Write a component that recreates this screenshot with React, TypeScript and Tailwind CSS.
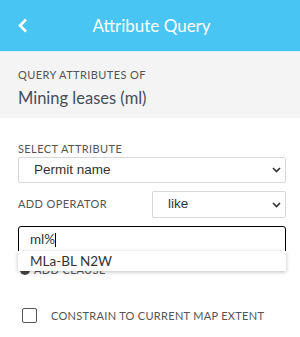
function ChevronDown() {
  return (
    <svg width="9" height="6" viewBox="0 0 9 6" className="shrink-0">
      <path d="M1 1l3.5 3.5L8 1" fill="none" stroke="#333" strokeWidth="1.6" />
    </svg>
  );
}

function SelectBox({ value, className }: { value: string; className?: string }) {
  return (
    <div
      className={`flex items-center justify-between rounded-[2px] border border-[#d8d8d8] bg-white pl-[15px] pr-[4px] ${className ?? ''}`}
    >
      <span className="text-[13.5px] text-[#333]" style={{ fontFamily: '"Liberation Sans", Arial, sans-serif' }}>
        {value}
      </span>
      <ChevronDown />
    </div>
  );
}

export default function App() {
  return (
    <div
      className="flex h-[337px] w-[300px] flex-col overflow-hidden bg-white"
      style={{ fontFamily: 'Lato, "Open Sans", sans-serif' }}
    >
      <header className="relative flex h-[51px] shrink-0 items-center justify-center bg-[#48c5f2]">
        <svg width="10" height="15" viewBox="0 0 10 15" className="absolute left-[18px] top-[18px]">
          <path d="M8 1.5L2 7.5l6 6" fill="none" stroke="white" strokeWidth="2.6" />
        </svg>
        <h1 className="pl-[3px] text-[17px] text-white">Attribute Query</h1>
      </header>
      <div className="h-px bg-[#d9eef8]" />
      <section className="h-[66px] bg-[#f4f4f4] px-[18px] pt-[16px]">
        <div className="text-[11px] leading-[14px] tracking-[0.4px] text-[#555]">QUERY ATTRIBUTES OF</div>
        <div className="mt-[6px] text-[16.5px] leading-[20px] text-[#474d59]">Mining leases (ml)</div>
      </section>
      <section className="relative pl-[18px] pr-[14px] pt-[24px]">
        <div className="text-[11px] leading-[14px] tracking-[0.4px] text-[#555]">SELECT ATTRIBUTE</div>
        <SelectBox value="Permit name" className="mt-px h-[26px]" />
        <div className="mt-[8px] flex items-center justify-between">
          <div className="text-[11px] tracking-[0.4px] text-[#555]">ADD OPERATOR</div>
          <SelectBox value="like" className="h-[27px] w-[134px]" />
        </div>
        <div className="relative mt-[8px]">
          <div className="flex h-[32px] items-start rounded-[3px] border-[1.5px] border-black px-[11px] pt-[4px]">
            <span className="text-[13.5px] leading-[17px] text-[#333]">ml%</span>
            <span className="mt-[2px] h-[14px] w-px bg-black" />
          </div>
          <div className="absolute left-0 right-0 top-[25px] z-10 bg-white px-[12px] py-[1px] text-[13.5px] leading-[18px] text-[#333] shadow-[0_1px_4px_rgba(0,0,0,0.25)]">
            MLa-BL N2W
          </div>
        </div>
        <div className="mt-[4px] flex items-center gap-[4px] pl-[2px]">
          <span className="h-[10px] w-[10px] rounded-full bg-[#444]" />
          <span className="text-[11px] tracking-[0.4px] text-[#555]">ADD CLAUSE</span>
        </div>
        <label className="mt-[29px] flex items-center gap-[14px] pl-[4px]">
          <span className="h-[15px] w-[15px] rounded-[2px] border-[1.5px] border-[#555]" />
          <span className="text-[11px] tracking-[0.3px] text-[#555]">CONSTRAIN TO CURRENT MAP EXTENT</span>
        </label>
      </section>
    </div>
  );
}
